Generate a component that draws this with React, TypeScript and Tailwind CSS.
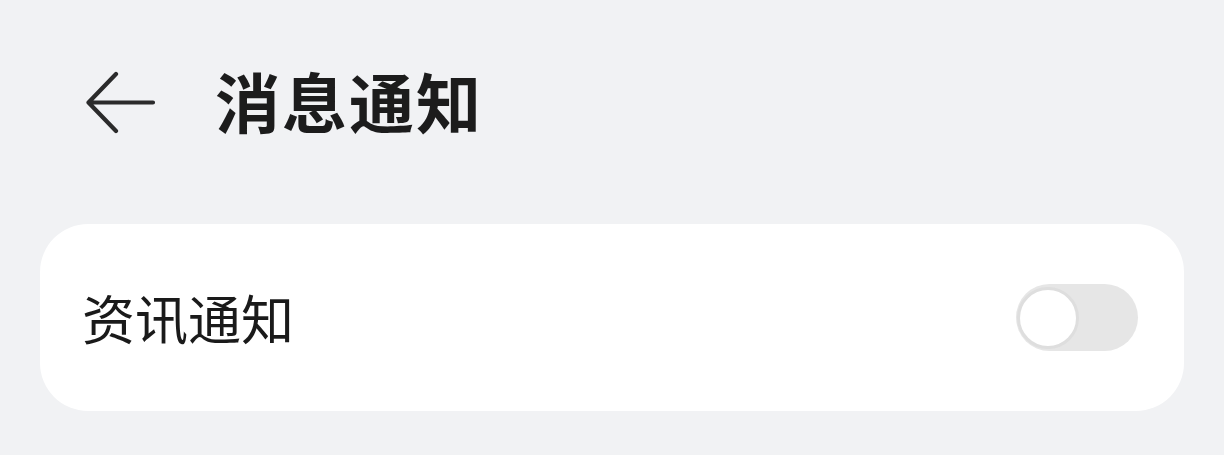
export default function App() {
  return (
    <div
      className="h-[455px] w-[1224px] overflow-hidden bg-[#f1f2f4]"
      style={{ fontFamily: '"Noto Sans CJK SC", "Noto Sans", sans-serif' }}
    >
      <header className="flex h-[206px] items-center">
        <button className="ml-[86px] flex h-[64px] w-[70px] items-center justify-center">
          <svg width="70" height="64" viewBox="0 0 70 64" fill="none">
            <path
              d="M67 31.5H4M30 3L2.5 31.5L30 60"
              stroke="#2b2b2b"
              strokeWidth="4.2"
              strokeLinecap="round"
              strokeLinejoin="round"
            />
          </svg>
        </button>
        <h1 className="mb-[6px] ml-[59px] text-[65px] leading-none font-bold tracking-[2px] text-[#1c1c1c]">消息通知</h1>
      </header>

      <section className="mx-[40px] mt-[18px] flex h-[187px] items-center justify-between rounded-[48px] bg-white pr-[46px] pl-[42px]">
        <span className="text-[53px] leading-none text-[#1a1a1a]">资讯通知</span>
        <button className="flex h-[67px] w-[122px] items-center rounded-full bg-[#e6e6e6] pl-[1px]">
          <span className="h-[62px] w-[62px] rounded-full border-[3px] border-[#dedede] bg-white" />
        </button>
      </section>
    </div>
  );
}
